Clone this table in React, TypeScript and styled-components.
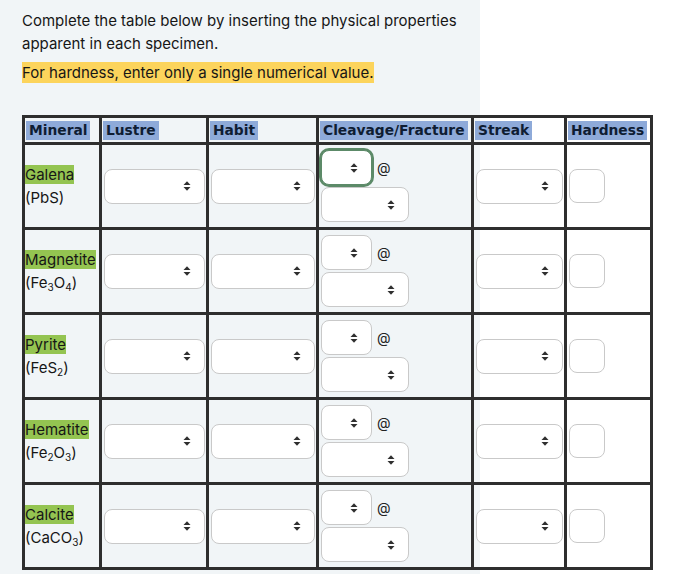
import React from "react";
import styled, { createGlobalStyle } from "styled-components";

const Global = createGlobalStyle`
  html, body { margin: 0; padding: 0; background: #ffffff; }
  body { font-family: Inter, "Liberation Sans", Arial, sans-serif; color: #161616; }
`;

const Panel = styled.div`
  width: 480px;
  min-height: 574px;
  box-sizing: border-box;
  background: #f1f5f7;
  padding: 9px 0 0 22px;
`;

const Intro = styled.p`
  margin: 0;
  font-size: 15px;
  line-height: 23px;
  width: 450px;
`;

const Note = styled.p`
  margin: 6px 0 0;
  font-size: 15px;
  line-height: 23px;
`;

const Mark = styled.span<{ $tone: "yellow" | "blue" | "green" }>`
  background: ${(p) =>
    p.$tone === "yellow" ? "#fcd45c" : p.$tone === "blue" ? "#8eaad9" : "#94c451"};
  padding: ${(p) => (p.$tone === "yellow" ? "1px 0" : p.$tone === "blue" ? "1px 3px 2px" : "0")};
`;

const Table = styled.table`
  margin-top: 31px;
  width: 628px;
  border-collapse: collapse;
  border: 3px solid #2e2e2e;
  table-layout: fixed;
`;

const Col = styled.col<{ $w: number }>`
  width: ${(p) => p.$w}px;
`;

const Th = styled.th`
  border: 3px solid #2e2e2e;
  padding: 2px 0 2px 1px;
  text-align: left;
  font-family: "DejaVu Sans", Verdana, sans-serif;
  font-size: 13.8px;
  line-height: 20px;
  font-weight: 700;
  color: #0f1d33;
  white-space: nowrap;
`;

const Td = styled.td<{ $pad?: string }>`
  border: 3px solid #2e2e2e;
  padding: ${(p) => p.$pad ?? "2px"};
  vertical-align: middle;
  font-size: 15px;
  line-height: 23px;
`;

const Sub = styled.sub`
  font-size: 10px;
  line-height: 0;
  vertical-align: -3px;
`;

const SelectBox = styled.div<{ $w?: number; $focus?: boolean }>`
  box-sizing: border-box;
  width: ${(p) => (p.$w ? `${p.$w}px` : "100%")};
  height: 35px;
  background: #ffffff;
  border: 1px solid ${(p) => (p.$focus ? "#5c8a68" : "#c9c9c9")};
  box-shadow: ${(p) => (p.$focus ? "0 0 0 2px #5c8a68" : "none")};
  border-radius: 8px;
  display: flex;
  align-items: center;
  justify-content: flex-end;
  padding-right: 13px;
  flex-shrink: 0;
`;

const HardnessBox = styled.div`
  box-sizing: border-box;
  width: 36px;
  height: 34px;
  background: #ffffff;
  border: 1px solid #c9c9c9;
  border-radius: 8px;
`;

const Stack = styled.div`
  display: flex;
  flex-direction: column;
  gap: 2px;
`;

const InlineRow = styled.div`
  display: flex;
  align-items: center;
  gap: 5px;
  font-size: 14px;
  color: #222;
`;

const Arrows = () => (
  <svg width="8" height="12" viewBox="0 0 8 12" aria-hidden="true">
    <polygon points="0.5,5 4,1.2 7.5,5" fill="#2f2f2f" />
    <polygon points="0.5,7 4,10.8 7.5,7" fill="#2f2f2f" />
  </svg>
);

const Select = ({ w, focus }: { w?: number; focus?: boolean }) => (
  <SelectBox $w={w} $focus={focus} role="combobox">
    <Arrows />
  </SelectBox>
);

type Mineral = { name: string; formula: React.ReactNode };

const minerals: Mineral[] = [
  { name: "Galena", formula: <>(PbS)</> },
  { name: "Magnetite", formula: <>(Fe<Sub>3</Sub>O<Sub>4</Sub>)</> },
  { name: "Pyrite", formula: <>(FeS<Sub>2</Sub>)</> },
  { name: "Hematite", formula: <>(Fe<Sub>2</Sub>O<Sub>3</Sub>)</> },
  { name: "Calcite", formula: <>(CaCO<Sub>3</Sub>)</> },
];

const headers: [string, number][] = [
  ["Mineral", 77],
  ["Lustre", 107],
  ["Habit", 110],
  ["Cleavage/Fracture", 155],
  ["Streak", 93],
  ["Hardness", 86],
];

export default function App() {
  return (
    <>
      <Global />
      <Panel>
        <Intro>
          Complete the table below by inserting the physical properties apparent in each specimen.
        </Intro>
        <Note>
          <Mark $tone="yellow">For hardness, enter only a single numerical value.</Mark>
        </Note>
        <Table>
          <colgroup>
            {headers.map(([h, w]) => (
              <Col key={h} $w={w} />
            ))}
          </colgroup>
          <thead>
            <tr>
              {headers.map(([h]) => (
                <Th key={h}>
                  <Mark $tone="blue">{h}</Mark>
                </Th>
              ))}
            </tr>
          </thead>
          <tbody>
            {minerals.map((m, i) => (
              <tr key={m.name}>
                <Td $pad="2px 0 2px 0">
                  <Mark $tone="green">{m.name}</Mark>
                  <br />
                  {m.formula}
                </Td>
                <Td $pad="2px 1px 2px 2px">
                  <Select />
                </Td>
                <Td $pad="2px 1px 2px 2px">
                  <Select />
                </Td>
                <Td $pad="5px 2px 5px 2px">
                  <Stack>
                    <InlineRow>
                      <Select w={51} focus={i === 0} />@
                    </InlineRow>
                    <Select w={88} />
                  </Stack>
                </Td>
                <Td $pad="2px 1px 2px 2px">
                  <Select />
                </Td>
                <Td $pad="2px">
                  <HardnessBox />
                </Td>
              </tr>
            ))}
          </tbody>
        </Table>
      </Panel>
    </>
  );
}
